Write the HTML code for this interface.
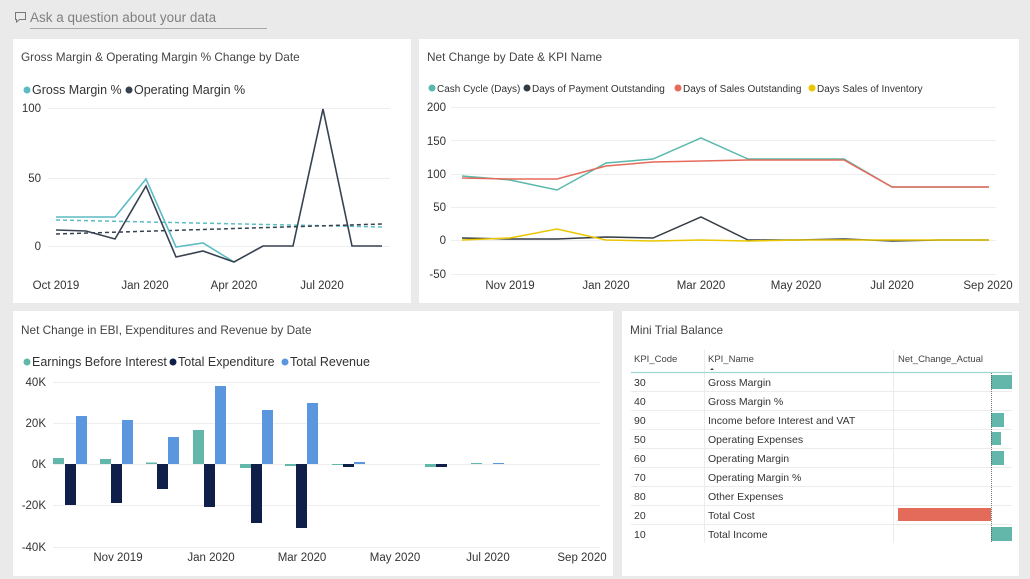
<!DOCTYPE html>
<html><head><meta charset="utf-8"><style>
html,body{margin:0;padding:0;background:#eaeaea;width:1030px;height:579px;overflow:hidden}
svg{display:block;font-family:"Liberation Sans",sans-serif}
</style></head><body>
<svg width="1030" height="579" viewBox="0 0 1030 579" xmlns="http://www.w3.org/2000/svg">
<rect width="1030" height="579" fill="#eaeaea"/>
<!-- Q&A -->
<path d="M15.5 12.5h10v7h-6l-3 2.5v-2.5h-1z" fill="none" stroke="#777" stroke-width="1"/>
<text x="30" y="22" font-size="13.5" fill="#808080">Ask a question about your data</text>
<line x1="30" y1="28.5" x2="267" y2="28.5" stroke="#a8a8a8" stroke-width="1"/>

<!-- panels -->
<rect x="13" y="39" width="398" height="264" fill="#fff"/>
<rect x="419" y="39" width="600" height="264" fill="#fff"/>
<rect x="13" y="311" width="600" height="265" fill="#fff"/>
<rect x="622" y="311" width="397" height="265" fill="#fff"/>

<!-- Chart 1 -->
<text x="21" y="61" font-size="11.8" fill="#444">Gross Margin &amp; Operating Margin % Change by Date</text>
<circle cx="27" cy="90" r="3.5" fill="#5bbcc4"/><text x="32" y="94" font-size="12.5" fill="#333">Gross Margin %</text>
<circle cx="129" cy="90" r="3.5" fill="#374250"/><text x="134" y="94" font-size="12.5" fill="#333">Operating Margin %</text>
<g stroke="#eee" stroke-width="1"><line x1="48" y1="108.5" x2="390" y2="108.5"/><line x1="48" y1="178.5" x2="390" y2="178.5"/><line x1="48" y1="246.5" x2="390" y2="246.5"/></g>
<g font-size="11.5" fill="#333"><text x="41" y="112" text-anchor="end">100</text><text x="41" y="182" text-anchor="end">50</text><text x="41" y="250" text-anchor="end">0</text>
<text x="56" y="289" text-anchor="middle">Oct 2019</text><text x="145" y="289" text-anchor="middle">Jan 2020</text><text x="234" y="289" text-anchor="middle">Apr 2020</text><text x="322" y="289" text-anchor="middle">Jul 2020</text></g>
<line x1="56" y1="220" x2="382" y2="227" stroke="#5bbcc4" stroke-width="1.5" stroke-dasharray="4,3"/>
<line x1="56" y1="234" x2="382" y2="224" stroke="#374250" stroke-width="1.5" stroke-dasharray="4,3"/>
<polyline fill="none" stroke="#5bbcc4" stroke-width="1.6" points="56,217 86,217 115,217 146,179 176,247 203,243 234,262"/>
<polyline fill="none" stroke="#374250" stroke-width="1.6" points="56,230 86,231 115,239 146,186 176,257 203,251 234,262 263,246 293,246 323,109 352,246 382,246"/>

<!-- Chart 2 -->
<text x="427" y="61" font-size="11.8" fill="#444">Net Change by Date &amp; KPI Name</text>
<g font-size="10" fill="#333">
<circle cx="432" cy="88" r="3.5" fill="#5ab8ab"/><text x="437" y="92">Cash Cycle (Days)</text>
<circle cx="527" cy="88" r="3.5" fill="#333c45"/><text x="532" y="92">Days of Payment Outstanding</text>
<circle cx="678" cy="88" r="3.5" fill="#e56a59"/><text x="683" y="92">Days of Sales Outstanding</text>
<circle cx="812" cy="88" r="3.5" fill="#eac600"/><text x="817" y="92">Days Sales of Inventory</text></g>
<g stroke="#eee"><line x1="451" y1="107.5" x2="996" y2="107.5"/><line x1="451" y1="140.5" x2="996" y2="140.5"/><line x1="451" y1="174.5" x2="996" y2="174.5"/><line x1="451" y1="207.5" x2="996" y2="207.5"/><line x1="451" y1="240.5" x2="996" y2="240.5"/><line x1="451" y1="274.5" x2="996" y2="274.5"/></g>
<g font-size="11.5" fill="#333" text-anchor="end"><text x="446" y="111">200</text><text x="446" y="145">150</text><text x="446" y="178">100</text><text x="446" y="211">50</text><text x="446" y="244">0</text><text x="446" y="278">-50</text></g>
<g font-size="11.5" fill="#333" text-anchor="middle"><text x="510" y="289">Nov 2019</text><text x="606" y="289">Jan 2020</text><text x="701" y="289">Mar 2020</text><text x="796" y="289">May 2020</text><text x="892" y="289">Jul 2020</text><text x="988" y="289">Sep 2020</text></g>
<polyline fill="none" stroke="#5ab8ab" stroke-width="1.5" points="462,176 510,180 557,190 606,163 653,159 701,138 748,159 796,159 844,159 892,187 940,187 989,187"/>
<polyline fill="none" stroke="#e56a59" stroke-width="1.5" points="462,178 510,179 557,179 606,166 653,162 701,161 748,160 796,160 844,160 892,187 940,187 989,187"/>
<polyline fill="none" stroke="#333c45" stroke-width="1.5" points="462,238 510,239 557,239 606,237 653,238 701,217 748,240 796,240 844,239 892,241 940,240 989,240"/>
<polyline fill="none" stroke="#eac600" stroke-width="1.5" points="462,240 510,238 557,229 606,240 653,241 701,240 748,241 796,240 844,240 892,240 940,240 989,240"/>

<!-- Chart 3 -->
<text x="21" y="334" font-size="11.8" fill="#444">Net Change in EBI, Expenditures and Revenue by Date</text>
<g font-size="12.5" fill="#333">
<circle cx="27" cy="362" r="3.5" fill="#62b6aa"/><text x="32" y="366">Earnings Before Interest</text>
<circle cx="173" cy="362" r="3.5" fill="#0f1f4a"/><text x="178" y="366">Total Expenditure</text>
<circle cx="285" cy="362" r="3.5" fill="#5b97de"/><text x="290" y="366">Total Revenue</text></g>
<g stroke="#eee"><line x1="53" y1="382.5" x2="600" y2="382.5"/><line x1="53" y1="423.5" x2="600" y2="423.5"/><line x1="53" y1="464.5" x2="600" y2="464.5"/><line x1="53" y1="505.5" x2="600" y2="505.5"/><line x1="53" y1="547.5" x2="600" y2="547.5"/></g>
<g font-size="11.5" fill="#333" text-anchor="end"><text x="46" y="386">40K</text><text x="46" y="427">20K</text><text x="46" y="468">0K</text><text x="46" y="509">-20K</text><text x="46" y="551">-40K</text></g>
<g font-size="11.5" fill="#333" text-anchor="middle"><text x="118" y="561">Nov 2019</text><text x="211" y="561">Jan 2020</text><text x="302" y="561">Mar 2020</text><text x="395" y="561">May 2020</text><text x="488" y="561">Jul 2020</text><text x="582" y="561">Sep 2020</text></g>
<g fill="#62b6aa">
<rect x="53" y="458" width="11" height="6"/><rect x="100" y="459" width="11" height="5"/><rect x="146" y="462.5" width="11" height="1.5"/><rect x="193" y="430" width="11" height="34"/><rect x="240" y="464" width="11" height="4"/><rect x="285" y="464" width="11" height="2"/><rect x="332" y="464" width="11" height="1"/><rect x="425" y="464" width="11" height="3"/><rect x="471" y="463" width="11" height="1"/></g>
<g fill="#0f1f4a">
<rect x="65" y="464" width="11" height="41"/><rect x="111" y="464" width="11" height="39"/><rect x="157" y="464" width="11" height="25"/><rect x="204" y="464" width="11" height="43"/><rect x="251" y="464" width="11" height="59"/><rect x="296" y="464" width="11" height="64"/><rect x="343" y="464" width="11" height="3"/><rect x="436" y="464" width="11" height="3"/></g>
<g fill="#5b97de">
<rect x="76" y="416" width="11" height="48"/><rect x="122" y="420" width="11" height="44"/><rect x="168" y="437" width="11" height="27"/><rect x="215" y="386" width="11" height="78"/><rect x="262" y="410" width="11" height="54"/><rect x="307" y="403" width="11" height="61"/><rect x="354" y="462" width="11" height="2"/><rect x="493" y="463" width="11" height="1"/></g>

<!-- Table -->
<text x="630" y="334" font-size="11.8" fill="#444">Mini Trial Balance</text>
<g font-size="9.5" fill="#444"><text x="634" y="362">KPI_Code</text><text x="708" y="362">KPI_Name</text><text x="898" y="362">Net_Change_Actual</text></g>
<path d="M710 370l2-2 2 2z" fill="#444"/>
<g stroke="#ececec"><line x1="704.5" y1="350" x2="704.5" y2="543"/><line x1="893.5" y1="350" x2="893.5" y2="543"/>
<line x1="631" y1="391.5" x2="1012" y2="391.5"/><line x1="631" y1="410.5" x2="1012" y2="410.5"/><line x1="631" y1="429.5" x2="1012" y2="429.5"/><line x1="631" y1="448.5" x2="1012" y2="448.5"/><line x1="631" y1="467.5" x2="1012" y2="467.5"/><line x1="631" y1="486.5" x2="1012" y2="486.5"/><line x1="631" y1="505.5" x2="1012" y2="505.5"/><line x1="631" y1="524.5" x2="1012" y2="524.5"/></g>
<line x1="631" y1="372.5" x2="1012" y2="372.5" stroke="#9fd6d0" stroke-width="1.2"/>
<g font-size="10.5" fill="#333">
<text x="634" y="386">30</text><text x="708" y="386">Gross Margin</text>
<text x="634" y="405">40</text><text x="708" y="405">Gross Margin %</text>
<text x="634" y="424">90</text><text x="708" y="424">Income before Interest and VAT</text>
<text x="634" y="443">50</text><text x="708" y="443">Operating Expenses</text>
<text x="634" y="462">60</text><text x="708" y="462">Operating Margin</text>
<text x="634" y="481">70</text><text x="708" y="481">Operating Margin %</text>
<text x="634" y="500">80</text><text x="708" y="500">Other Expenses</text>
<text x="634" y="519">20</text><text x="708" y="519">Total Cost</text>
<text x="634" y="538">10</text><text x="708" y="538">Total Income</text></g>
<g fill="#62b6aa"><rect x="991" y="375" width="21" height="14"/><rect x="991" y="413" width="13" height="14"/><rect x="991" y="432" width="10" height="13"/><rect x="991" y="451" width="13" height="14"/><rect x="991" y="527" width="21" height="14"/></g>
<rect x="898" y="508" width="93" height="13" fill="#e46a59"/>
<line x1="991.5" y1="373" x2="991.5" y2="542" stroke="#555" stroke-width="0.8" stroke-dasharray="1,1"/>
</svg>
</body></html>
